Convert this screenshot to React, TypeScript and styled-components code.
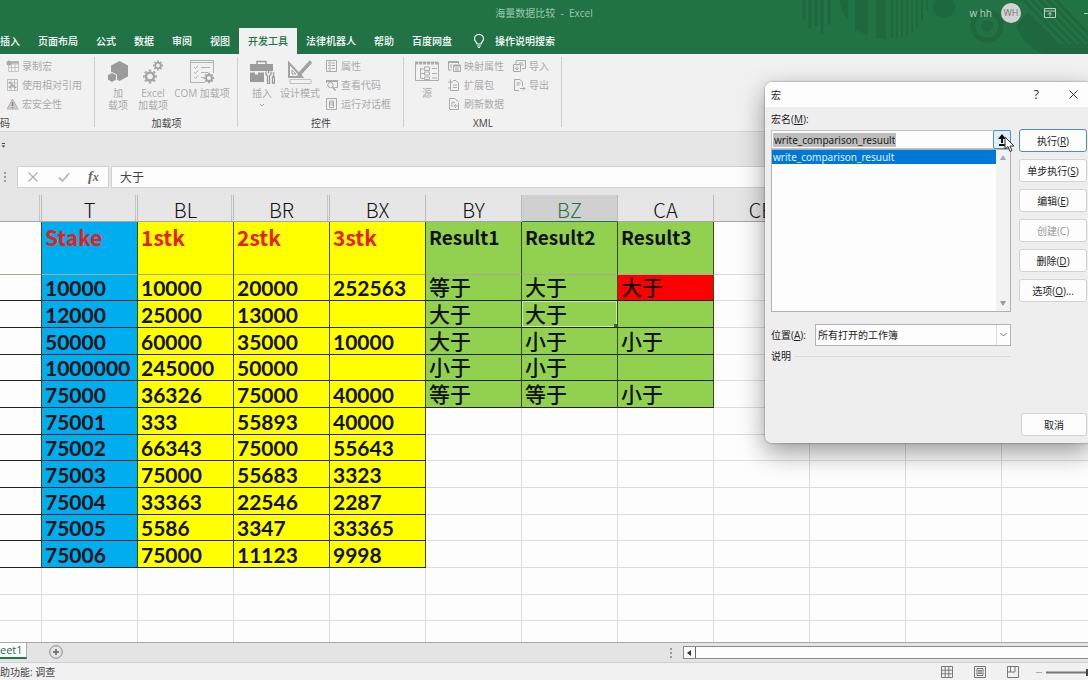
import React from "react";
import styled, { createGlobalStyle, css } from "styled-components";

const GlobalStyle = createGlobalStyle`
  *, *::before, *::after { box-sizing: border-box; }
  body { margin: 0; }
  button, input, select { font: inherit; color: inherit; margin: 0; padding: 0; border: 0; background: none; }
  svg { display: block; flex: none; }
`;

const ui = `"Open Sans", "Noto Sans CJK SC", sans-serif`;
const green = "#217346";

const Window = styled.div`
  position: relative;
  display: flex;
  flex-direction: column;
  height: 100vh;
  overflow: hidden;
  background: #fff;
  font: 10px/14px ${ui};
  color: #444;
`;

/* ---------- title and tabs ---------- */

const Header = styled.header`
  position: relative;
  background: ${green};
  color: #fff;
  flex: none;
`;
const Backdrop = styled.svg`
  position: absolute;
  right: 0;
  top: 0;
`;
const TitleBar = styled.div`
  position: relative;
  display: grid;
  grid-template-columns: 1fr auto 1fr;
  align-items: center;
  height: 25px;
  margin-bottom: 3px;
`;
const Title = styled.div`
  grid-column: 2;
  color: #9ac7ac;
  white-space: pre;
`;
const Account = styled.div`
  display: flex;
  align-items: center;
  justify-content: flex-end;
  color: #b5d3c0;
`;
const Avatar = styled.span`
  width: 20px;
  height: 20px;
  margin: 0 23px 0 9px;
  border-radius: 50%;
  background: #d3d3d1;
  color: #777;
  font-size: 9px;
  line-height: 20px;
  text-align: center;
`;
const WindowButton = styled.button`
  margin-right: 28px;
  color: #b5d3c0;
  &:last-child { margin-right: 0; }
`;
const Tabs = styled.nav`
  position: relative;
  display: flex;
  height: 26px;
`;
const Tab = styled.button<{ $active?: boolean }>`
  display: flex;
  align-items: center;
  gap: 10px;
  padding: 0 9px;
  white-space: nowrap;
  font-weight: 500;
  &:first-child { padding-left: 0; }
  ${(p) => p.$active && css`background: #f1f1f1; color: ${green};`}
`;
const TellMe = styled(Tab)`
  padding-left: 12px;
`;

/* ---------- ribbon ---------- */

const Ribbon = styled.div`
  display: flex;
  flex: none;
  height: 77px;
  padding: 2px 0 0;
  background: #f1f1f1;
`;
const Group = styled.section<{ $width: number; $pad: number }>`
  display: flex;
  flex-direction: column;
  flex: none;
  position: relative;
  width: ${(p) => p.$width}px;
  &::after {
    content: "";
    position: absolute;
    right: 0;
    top: 1px;
    height: 70px;
    border-right: 1px solid #cfcfcf;
  }
  > div { padding-left: ${(p) => p.$pad}px; }
`;
const GroupBody = styled.div`
  display: flex;
  height: 59px;
  color: #aaa;
`;
const GroupLabel = styled.h2<{ $left?: boolean }>`
  margin: 0;
  font-size: 10px;
  line-height: 16px;
  font-weight: 400;
  text-align: ${(p) => (p.$left ? "left" : "center")};
`;
const Big = styled.button<{ $width: number }>`
  display: flex;
  flex-direction: column;
  align-items: center;
  width: ${(p) => p.$width}px;
  padding-top: 4px;
  line-height: 12px;
  white-space: pre;
  text-align: center;
  svg { margin-bottom: 3px; }
`;
const SmallColumn = styled.div`
  display: flex;
  flex-direction: column;
  margin-left: 5px;
  & + & { margin-left: 9px; }
`;
const Small = styled.button`
  display: flex;
  align-items: center;
  gap: 3px;
  height: 19px;
  white-space: nowrap;
`;

/* ---------- formula bar ---------- */

const FormulaZone = styled.div`
  flex: none;
  background: #e6e6e6;
  border-top: 1px solid #d4d4d4;
  padding: 9px 0 7px;
`;
const QuickAccess = styled.button`
  display: block;
  height: 10px;
  margin-bottom: 15px;
`;
const FormulaRow = styled.div`
  display: flex;
  align-items: center;
  height: 22px;
`;
const Grip = styled.svg`
  margin: 0 11px 0 4px;
`;
const FormulaButtons = styled.div`
  display: flex;
  align-items: center;
  justify-content: space-around;
  width: 92px;
  height: 22px;
  margin-right: 2px;
  background: #fdfdfd;
  border: 1px solid #d0d0d0;
`;
const FxButton = styled.button`
  font: italic bold 14px/18px "Liberation Serif", serif;
  color: #666;
  small { font-size: 12px; }
`;
const FormulaInput = styled.input`
  flex: 1;
  min-width: 0;
  height: 22px;
  padding: 0 8px;
  background: #fdfdfd;
  border: 1px solid #d0d0d0;
  font-size: 12px;
`;

/* ---------- sheet ---------- */

const Sheet = styled.main`
  flex: 1;
  min-height: 0;
  overflow: hidden;
  background: #fdfdfd;
`;
const Grid = styled.table`
  table-layout: fixed;
  width: 1098px;
  border-collapse: separate;
  border-spacing: 0;
  font-family: "Noto Sans CJK SC", sans-serif;
`;
const FirstCol = styled.col`
  width: 42px;
`;
const ColHead = styled.th<{ $selected?: boolean; $double?: boolean }>`
  height: 27px;
  padding: 3px 0 0;
  font-size: 20px;
  line-height: 22px;
  font-weight: 300;
  color: #111;
  background: #e6e6e6;
  border-right: 1px solid #bcbcbc;
  border-bottom: 1px solid #a6a6a6;
  ${(p) => p.$double && css`box-shadow: inset -1px 0 #e6e6e6, inset -2px 0 #c4c4c4;`}
  ${(p) => p.$selected && css`background: #d0d0d0; color: ${green}; border-bottom-color: ${green};`}
`;
const fills = {
  blue: "#00adee",
  yellow: "#ffff00",
  green: "#92d050",
  red: "#ff0000",
  none: "transparent",
};
type Fill = keyof typeof fills;

const Row = styled.tr<{ $head?: boolean }>`
  height: ${(p) => (p.$head ? 53 : 27)}px;
  &:nth-child(3n + 2) { height: ${(p) => (p.$head ? 53 : 26)}px; }
`;
const Cell = styled.td<{ $fill: Fill; $dark?: boolean; $right?: boolean; $head?: boolean; $red?: boolean; $num?: boolean; $active?: boolean }>`
  position: relative;
  padding: 0 0 0 3px;
  white-space: nowrap;
  background: ${(p) => fills[p.$fill]};
  color: ${(p) => (p.$red ? "#e8201a" : "#111")};
  font-family: "Liberation Sans", "Noto Sans CJK SC", sans-serif;
  font-size: 21px;
  line-height: 25px;
  font-weight: 500;
  border-right: 1px solid ${(p) => (p.$dark || p.$right ? "#3a4a20" : "#dcdcdc")};
  border-bottom: 1px solid ${(p) => (p.$head ? "#a9a98c" : p.$dark ? "#222" : "#dcdcdc")};
  ${(p) => p.$head && css`
    vertical-align: top;
    font-family: "Noto Sans CJK SC", sans-serif;
    font-size: ${p.$red ? 21 : 19}px;
    line-height: 30px;
    font-weight: 700;
  `}
  ${(p) => p.$num && css`font-family: Lato, sans-serif; font-weight: 700;`}
  ${(p) => p.$active && css`
    box-shadow: inset 0 0 0 1px #c9e8b4;
    &::after {
      content: "";
      position: absolute;
      right: 0;
      bottom: 0;
      width: 3px;
      height: 3px;
      background: ${green};
    }
  `}
`;

/* ---------- bottom bars ---------- */

const SheetBar = styled.div`
  display: flex;
  flex: none;
  height: 20px;
  background: #e4e4e4;
  border-top: 1px solid #a8a8a8;
`;
const SheetTab = styled.button`
  width: 27px;
  height: 16px;
  background: #fdfdfd;
  border-right: 1px solid #aaa;
  border-bottom: 2px solid ${green};
  color: ${green};
  font-size: 11px;
  line-height: 14px;
  text-align: left;
`;
const AddSheet = styled.button`
  margin: 2px auto 0 22px;
  align-self: flex-start;
`;
const Scroller = styled.div`
  display: flex;
  align-items: center;
  width: 39%;
  padding-left: 2px;
`;
const Track = styled.div`
  display: flex;
  flex: 1;
  height: 13px;
  border: 1px solid #8a8a8a;
  border-right: 0;
  background: #fdfdfd;
`;
const TrackButton = styled.button`
  display: flex;
  align-items: center;
  justify-content: center;
  width: 12px;
  border-right: 1px solid #666;
`;
const StatusBar = styled.footer`
  display: flex;
  align-items: center;
  flex: none;
  height: 18px;
  background: #f1f1f2;
  border-top: 1px solid #d0d0d0;
`;
const StatusText = styled.span`
  margin-right: auto;
`;
const ViewButton = styled.button`
  margin-right: 21px;
  &:last-of-type { margin-right: 15px; }
`;

/* ---------- dialog ---------- */

const Dialog = styled.section`
  position: absolute;
  right: -4px;
  top: 82px;
  width: 327px;
  height: 361px;
  display: flex;
  flex-direction: column;
  background: #eee;
  border-radius: 7px;
  overflow: hidden;
  color: #222;
`;
const DialogShadow = styled.div`
  position: absolute;
  right: -4px;
  top: 82px;
  width: 327px;
  height: 361px;
  border-radius: 7px;
  box-shadow: 0 0 2px rgba(0, 0, 0, 0.5), 0 9px 26px rgba(0, 0, 0, 0.4);
`;
const DialogTitle = styled.header`
  display: flex;
  align-items: center;
  height: 25px;
  padding: 0 14px 0 6px;
  background: #fdfdfd;
  h1 { margin: 0 auto 0 0; font-size: 10px; font-weight: 400; }
  button { margin-left: 30px; }
`;
const HelpButton = styled.button`
  font-size: 12px;
`;
const DialogBody = styled.div`
  display: flex;
  flex: 1;
  justify-content: space-between;
  padding: 5px 5px 7px 6px;
`;
const Fields = styled.div`
  width: 240px;
`;
const NameLabel = styled.label`
  display: block;
  height: 18px;
`;
const NameBox = styled.div`
  display: flex;
  align-items: center;
  height: 19px;
  padding-left: 1px;
  background: #fdfdfd;
  border: 1px solid #c2c2c2;
  border-right: 0;
`;
const NameInput = styled.input`
  field-sizing: content;
  height: 14px;
  padding: 0 1px;
  background: #bdbdbd;
  font-family: "Noto Sans", sans-serif;
`;
const RefButton = styled.button`
  display: flex;
  align-items: center;
  justify-content: center;
  width: 18px;
  height: 19px;
  margin-left: auto;
  border: 1px solid #4f96b5;
  border-radius: 2px;
  background: #dfeff8;
`;
const ListBox = styled.div`
  display: flex;
  height: 163px;
  border: 1px solid #b0b0b0;
  background: #fdfdfd;
`;
const List = styled.ul`
  flex: 1;
  margin: 0;
  padding: 0;
  list-style: none;
`;
const Item = styled.li`
  padding-left: 1px;
  background: #0078d7;
  color: #e2f2ff;
  font-family: "Noto Sans", sans-serif;
`;
const ListScroll = styled.div`
  display: flex;
  flex-direction: column;
  justify-content: space-between;
  align-items: center;
  width: 14px;
  padding: 5px 0;
  background: #f2f2f2;
`;
const PlaceRow = styled.div`
  display: flex;
  align-items: center;
  justify-content: space-between;
  margin: 12px 0 3px;
`;
const SelectBox = styled.div`
  position: relative;
  width: 196px;
  svg { position: absolute; right: 4px; top: 8px; }
  &::after { content: ""; position: absolute; right: 14px; top: 1px; bottom: 1px; border-left: 1px solid #ddd; }
`;
const Select = styled.select`
  appearance: none;
  width: 100%;
  height: 22px;
  padding: 0 2px;
  background: #fdfdfd;
  border: 1px solid #b4b4b4;
`;
const Description = styled.div`
  display: flex;
  align-items: center;
  gap: 4px;
  &::after { content: ""; flex: 1; border-top: 1px solid #dcdcdc; }
`;
const Actions = styled.div`
  display: flex;
  flex-direction: column;
  gap: 7px;
  width: 68px;
  padding-top: 17px;
`;
const Action = styled.button<{ $primary?: boolean; $last?: boolean }>`
  height: 23px;
  background: #fdfdfd;
  border: 1px solid ${(p) => (p.$primary ? "#4a90bd" : "#d2d2d2")};
  border-radius: 3px;
  ${(p) => p.$last && css`margin: auto 0 0 2px;`}
  &:disabled { color: #999; }
`;
const Pointer = styled.svg`
  position: absolute;
  right: 73px;
  top: 136px;
`;

/* ---------- icons ---------- */

const Line = ({ w = 12, h = 12, vb, children, sw = 1 }: { w?: number; h?: number; vb?: string; sw?: number; children: React.ReactNode }) => (
  <svg width={w} height={h} viewBox={vb ?? `0 0 ${w} ${h}`} fill="none" stroke="currentColor" strokeWidth={sw}>
    {children}
  </svg>
);

const Record = () => (
  <Line w={13}><path d="M2.5 5v6.5h10v-10H5M5 4h7M5.5 4v7M9 4v7M2.5 7.5h10" strokeOpacity=".6" /><circle cx="3" cy="3" r="2.5" fill="currentColor" stroke="none" /><path d="M5 2.5h7.5" strokeWidth="2" /></Line>
);
const Relative = () => (
  <Line w={13}><path d="M1.5.5h10v11h-10zM1.5 4h10M1.5 8h10M5 .5v11M8.500 .5v11" strokeOpacity=".7" /><path d="M3 3l7 6M3 9l3-3" strokeWidth="1.500" /></Line>
);
const Warning = () => (
  <Line w={13}><path d="M6.500 1L12 11H1z" fill="#cfcbd0" stroke="#b5b0b5" /><path d="M6.500 4v4M6.500 9v1.200" stroke="#8d858d" strokeWidth="1.500" /></Line>
);
const Hexes = () => (
  <svg width="24" height="24" viewBox="0 0 24 24" fill="#9b9b9b">
    <path d="M13.500 1L22 5.500v11L13.500 21 5 16.500v-11z" />
    <path d="M6 12.500l4.500 2.300v5L6 22.500l-4.500-2.700v-5z" stroke="#f1f1f1" />
  </svg>
);
const gear = (cx: number, cy: number, r: number, w: number) => (
  <g fill="none" stroke="#a3a3a3">
    <circle cx={cx} cy={cy} r={r} strokeWidth={w} />
    {[0, 45, 90, 135, 180, 225, 270, 315].map((a) => (
      <path key={a} strokeWidth={w} d={`M${cx} ${cy - r - w / 2}v-${w * 0.7}`} transform={`rotate(${a} ${cx} ${cy})`} />
    ))}
  </g>
);
const Gears = () => (
  <svg width="24" height="24" viewBox="0 0 24 24">{gear(9, 16.5, 4, 2.4)}{gear(17, 5.5, 2.8, 1.8)}</svg>
);
const ComAddins = () => (
  <svg width="26" height="24" viewBox="0 0 26 24" fill="none" stroke="#b3b3b3">
    <path d="M16 22.500H1.500v-22h23V13M1 2.500h23" />
    <path d="M12 7.500h9M12 12.500h7M12 17.500h3M5 7l1.500 1.500L9 5.500M5 12l1.500 1.500L9 10.500M5 17l1.500 1.500L9 15.500" />
    {gear(20, 18, 3, 1.8)}
  </svg>
);
const Toolbox = () => (
  <svg width="26" height="24" viewBox="0 0 26 24" fill="#9b9b9b">
    <path d="M8 4V1.500h9V4" fill="none" stroke="#9b9b9b" strokeWidth="1.500" />
    <path d="M1 4h23v7H1zM1 12.500h5v2h3v-2h6V22H1z" />
    <path d="M17 11.500v3l1.500 1.500V24h2v-8l1.500-1.500v-3M19.500 11v2.500M24.500 12v5M23.500 17h2v6h-2z" fill="none" stroke="#9b9b9b" strokeWidth="1.300" />
  </svg>
);
const Design = () => (
  <svg width="26" height="24" viewBox="0 0 26 24" fill="none" stroke="#a3a3a3">
    <path d="M2 3v14h13z" strokeWidth="2" /><path d="M5 10v4h4z" />
    <path d="M24 1.500L13 13.500" strokeWidth="3.500" /><path d="M12 12.500l-2 5 5-2.500" fill="#a3a3a3" />
    <path d="M3 19.500h21v4H3z" strokeOpacity=".6" />
  </svg>
);
const Properties = () => (
  <Line><path d="M.5.500h10v11H.5zM4 .5v11M2 3h1M5.500 3H9M2 5.500h1M5.500 5.500H9M2 8.500h1M5.500 8.500H9" /></Line>
);
const ViewCode = () => (
  <Line><path d="M8.500 8.500h3v-7H.5V4M.5 8v.5" /><path d="M0 2h12" strokeWidth="2" /><circle cx="4.500" cy="6" r="2.700" /><path d="M6.500 8l3 3.500" strokeWidth="1.500" /></Line>
);
const RunDialog = () => (
  <Line><path d="M.5.500h10v11H.5zM3.500 3h4v6.500h-4zM4 5h3M4 7h3" /></Line>
);
const Source = () => (
  <svg width="24" height="24" viewBox="0 0 24 24" fill="none" stroke="#adadad">
    <path d="M.5 2.500h23v18H.5z" /><path d="M0 3h24" strokeWidth="3" strokeDasharray="3 1" />
    <path d="M5.500 8v10.500M5.500 9h4M5.500 13.500h4M5.500 18.500h4M9.500 7h5v3.500h-5zM9.500 12h5v3h-5zM9.500 17h5v2.500h-5zM17 8.500h5M17 13.500h5M17 18h5" />
  </svg>
);
const MapProps = () => (
  <Line w={13}><path d="M.5 1.500h10V4M.5 1v9h3M5.500 5.500h7v6h-7zM7 8h4M7 10h4M2 5h2M2 7h2" /><path d="M.5 2h10.500M5.500 5.500h7" strokeWidth="2" /></Line>
);
const Pack = () => (
  <Line w={13}><path d="M2.500 4v7.500h8V4L8 1.500H5M5 6h4M5 8.500h4M0 3h5M2.500.500v5M0 9h2" /></Line>
);
const Refresh = () => (
  <Line w={13}><path d="M7 .5H1.500v11h9V5M7 .5L10.500 4M4 4v5M8 6l-2 2 2 2M6 8h4M4 4l3 .5" /></Line>
);
const Import = () => (
  <Line w={13}><path d="M3 4V.500h9.500v8H9M.5 4.500h7v7h-7zM6 3h4M8 5h3M4 5.500v4M2 8l2 2 2-2" /></Line>
);
const Export = () => (
  <Line w={13}><path d="M6 11.500H1.500V.500H7L9.500 3v4M3.500 4h4M3.500 6h3M7 9.500h5M10 7.500l2 2-2 2" /></Line>
);

const diagonals = [14, 22, 30, 38, 46];

const Decoration = () => (
  <Backdrop width="288" height="54" viewBox="0 0 288 54" fill="none" stroke="#1f683f" strokeWidth="4" aria-hidden="true">
    <path d="M4 0v20M10 0v28M16 0v26M22 0v34M29 0v25" strokeWidth="3" />
    <path d="M40 0h8v19q-8-8-8-19zM55 0h13v35l-13-5zM76 0h10v39l-10-1z" fill="#1f683f" stroke="none" />
    <path d="M92 0v38M97 0v38M102 0v37M107 0v36M112 0v33M117 0v28M122 0v20M127 0v10" strokeWidth="2" />
    <circle cx="144" cy="7" r="11" fill="#1f683f" stroke="none" />
    <circle cx="187" cy="26" r="14" strokeWidth="5" />
    <circle cx="187" cy="26" r="6" fill="#1f683f" stroke="none" />
    <path d="M216 26q6 18 26 28h46V44h-28L228 12z" fill="#1f683f" stroke="none" />
    {diagonals.map((x) => (
      <path key={x} d={`M${x + 204} -6L${x + 254} 46`} strokeWidth="3" />
    ))}
  </Backdrop>
);

/* ---------- data ---------- */

const columns = ["", "T", "BL", "BR", "BX", "BY", "BZ", "CA", "CB", "", "", ""];
const headings = ["Stake", "1stk", "2stk", "3stk", "Result1", "Result2", "Result3"];
const rows: string[][] = [
  ["10000", "10000", "20000", "252563", "等于", "大于", "大于"],
  ["12000", "25000", "13000", "", "大于", "大于", ""],
  ["50000", "60000", "35000", "10000", "大于", "小于", "小于"],
  ["1000000", "245000", "50000", "", "小于", "小于", ""],
  ["75000", "36326", "75000", "40000", "等于", "等于", "小于"],
  ["75001", "333", "55893", "40000"],
  ["75002", "66343", "75000", "55643"],
  ["75003", "75000", "55683", "3323"],
  ["75004", "33363", "22546", "2287"],
  ["75005", "5586", "3347", "33365"],
  ["75006", "75000", "11123", "9998"],
  [],
  [],
  [],
];
const fillFor = (i: number): Fill => (i === 0 ? "blue" : i < 4 ? "yellow" : "green");
const slots = Array.from({ length: 11 }, (_, i) => i);

const actions: { text: string; hot: string; tail?: string; disabled?: boolean }[] = [
  { text: "执行", hot: "R" },
  { text: "单步执行", hot: "S" },
  { text: "编辑", hot: "E" },
  { text: "创建", hot: "C", disabled: true },
  { text: "删除", hot: "D" },
  { text: "选项", hot: "O", tail: "..." },
];

export default function App() {
  return (
    <Window>
      <GlobalStyle />
      <Header>
        <Decoration />
        <TitleBar>
          <Title>海量数据比较  -  Excel</Title>
          <Account>
            <span>w hh</span>
            <Avatar>WH</Avatar>
            <WindowButton aria-label="功能区显示选项">
              <Line w={12} h={10}><path d="M.5.500h11v9H.5zM.5 3h11M6 8.500V4.500M4 6.500l2-2 2 2" /></Line>
            </WindowButton>
            <WindowButton aria-label="最小化">
              <Line w={4} h={10}><path d="M0 5.500h4" /></Line>
            </WindowButton>
          </Account>
        </TitleBar>
        <Tabs>
          {["插入", "页面布局", "公式", "数据", "审阅", "视图", "开发工具", "法律机器人", "帮助", "百度网盘"].map((t) => (
            <Tab key={t} $active={t === "开发工具"}>{t}</Tab>
          ))}
          <TellMe>
            <Line w={12} h={14} sw={1.2}><path d="M4 10C4 8 1.500 7.500 1.500 4.800a4.500 4.300 0 0 1 9 0C10.500 7.500 8 8 8 10zM4 12h4M5 13.500h2" /></Line>
            操作说明搜索
          </TellMe>
        </Tabs>
      </Header>

      <Ribbon>
        <Group $width={95} $pad={6}>
          <GroupBody>
            <div>
              <Small><Record />录制宏</Small>
              <Small><Relative />使用相对引用</Small>
              <Small><Warning />宏安全性</Small>
            </div>
          </GroupBody>
          <GroupLabel $left>码</GroupLabel>
        </Group>
        <Group $width={143} $pad={7}>
          <GroupBody>
            <Big $width={32}><Hexes />{"加\n载项"}</Big>
            <Big $width={38}><Gears />{"Excel\n加载项"}</Big>
            <Big $width={60}><ComAddins />COM 加载项</Big>
          </GroupBody>
          <GroupLabel>加载项</GroupLabel>
        </Group>
        <Group $width={166} $pad={7}>
          <GroupBody>
            <Big $width={34}>
              <Toolbox />插入
              <Line w={6} h={12}><path d="M1 5l2 2 2-2" /></Line>
            </Big>
            <Big $width={42}><Design />设计模式</Big>
            <SmallColumn>
              <Small><Properties />属性</Small>
              <Small><ViewCode />查看代码</Small>
              <Small><RunDialog />运行对话框</Small>
            </SmallColumn>
          </GroupBody>
          <GroupLabel>控件</GroupLabel>
        </Group>
        <Group $width={158} $pad={7}>
          <GroupBody>
            <Big $width={32}><Source />源</Big>
            <SmallColumn>
              <Small><MapProps />映射属性</Small>
              <Small><Pack />扩展包</Small>
              <Small><Refresh />刷新数据</Small>
            </SmallColumn>
            <SmallColumn>
              <Small><Import />导入</Small>
              <Small><Export />导出</Small>
            </SmallColumn>
          </GroupBody>
          <GroupLabel>XML</GroupLabel>
        </Group>
      </Ribbon>

      <FormulaZone>
        <QuickAccess aria-label="自定义快速访问工具栏">
          <svg width="6" height="6" viewBox="0 0 6 6" fill="#444"><path d="M2 0h3v1H2zM1.500 2.500h4l-2 2z" /></svg>
        </QuickAccess>
        <FormulaRow>
          <Grip width="2" height="10" viewBox="0 0 2 10" fill="#999"><path d="M0 0h2v2H0zM0 4h2v2H0zM0 8h2v2H0z" /></Grip>
          <FormulaButtons>
            <button aria-label="取消"><Line sw={1.3}><path d="M1.500 1.500l9 9M10.500 1.500l-9 9" stroke="#b0b0b0" /></Line></button>
            <button aria-label="输入"><Line sw={1.8}><path d="M1 6.500L4.500 10 11 2.500" stroke="#b8b8b8" /></Line></button>
            <FxButton aria-label="插入函数">f<small>x</small></FxButton>
          </FormulaButtons>
          <FormulaInput aria-label="编辑栏" defaultValue="大于" />
        </FormulaRow>
      </FormulaZone>

      <Sheet>
        <Grid>
          <colgroup>
            <FirstCol />
            {slots.map((i) => <col key={i} />)}
          </colgroup>
          <thead>
            <tr>
              {columns.map((c, i) => (
                <ColHead key={i} $selected={c === "BZ"} $double={i < 4}>{c}</ColHead>
              ))}
            </tr>
          </thead>
          <tbody>
            <Row $head>
              <Cell $fill="none" $head $right />
              {slots.map((i) => (
                <Cell key={i} $head={i < 7} $dark={i < 7} $red={i < 4} $fill={i < 7 ? fillFor(i) : "none"}>{headings[i]}</Cell>
              ))}
            </Row>
            {rows.map((r, n) => (
              <Row key={n}>
                <Cell $fill="none" $dark={r.length > 0} />
                {slots.map((i) => (
                  <Cell
                    key={i}
                    $num={i < 4}
                    $dark={i < r.length}
                    $fill={i >= r.length ? "none" : n === 0 && i === 6 ? "red" : fillFor(i)}
                    $active={n === 1 && i === 5}
                  >
                    {r[i]}
                  </Cell>
                ))}
              </Row>
            ))}
          </tbody>
        </Grid>
      </Sheet>

      <SheetBar>
        <SheetTab>eet1</SheetTab>
        <AddSheet aria-label="新工作表">
          <Line w={14} h={14}><circle cx="7" cy="7" r="6.300" stroke="#888" /><path d="M7 4v6M4 7h6" stroke="#666" strokeWidth="1.500" /></Line>
        </AddSheet>
        <Scroller>
          <Grip width="2" height="10" viewBox="0 0 2 10" fill="#999"><path d="M0 0h2v2H0zM0 4h2v2H0zM0 8h2v2H0z" /></Grip>
          <Track>
            <TrackButton aria-label="向左滚动">
              <svg width="4" height="6" viewBox="0 0 4 6" fill="#333"><path d="M4 0v6L0 3z" /></svg>
            </TrackButton>
          </Track>
        </Scroller>
      </SheetBar>
      <StatusBar>
        <StatusText>助功能: 调查</StatusText>
        <ViewButton aria-label="普通"><Line><path d="M.5.500h11v11H.5zM.5 4.200h11M.5 7.800h11M4.200.5v11M7.800.5v11" stroke="#777" /></Line></ViewButton>
        <ViewButton aria-label="页面布局"><Line><path d="M.5.500h11v11H.5zM3 2.500h6v7H3zM4 4.500h4M4 6h4M4 7.500h4" stroke="#777" /></Line></ViewButton>
        <ViewButton aria-label="分页预览"><Line><path d="M.5.500h11v11H.5zM3.500.500V6H8V.5M.5 6h3" stroke="#777" /></Line></ViewButton>
        <svg width="54" height="12" viewBox="0 0 54 12" stroke="#777"><path d="M2 6.500h6" stroke="#aaa" /><path d="M12 6.500h42" strokeWidth="2" /><path d="M53 3v7" stroke="#444" strokeWidth="2" /></svg>
      </StatusBar>

      <DialogShadow />
      <Dialog role="dialog" aria-label="宏">
        <DialogTitle>
          <h1>宏</h1>
          <HelpButton aria-label="帮助">?</HelpButton>
          <button aria-label="关闭"><Line w={9} h={9}><path d="M.5.500l8 8M8.500.500l-8 8" stroke="#333" /></Line></button>
        </DialogTitle>
        <DialogBody>
          <Fields>
            <NameLabel htmlFor="macro-name">宏名(<u>M</u>):</NameLabel>
            <NameBox>
              <NameInput id="macro-name" defaultValue="write_comparison_resuult" />
              <RefButton aria-label="选择引用">
                <svg width="8" height="12" viewBox="0 0 8 12" fill="#111"><path d="M4 0l4 5H5v4H3V5H0zM1 10h6v2H1z" /></svg>
              </RefButton>
            </NameBox>
            <ListBox>
              <List><Item>write_comparison_resuult</Item></List>
              <ListScroll>
                <svg width="6" height="5" viewBox="0 0 6 5" fill="#aaa"><path d="M3 0l3 5H0z" /></svg>
                <svg width="6" height="5" viewBox="0 0 6 5" fill="#999"><path d="M0 0h6L3 5z" /></svg>
              </ListScroll>
            </ListBox>
            <PlaceRow>
              <label htmlFor="place">位置(<u>A</u>):</label>
              <SelectBox>
                <Select id="place"><option>所有打开的工作簿</option></Select>
                <Line w={7} h={6}><path d="M.5 1l3 3 3-3" stroke="#777" /></Line>
              </SelectBox>
            </PlaceRow>
            <Description>说明</Description>
          </Fields>
          <Actions>
            {actions.map((a, i) => (
              <Action key={a.hot} $primary={i === 0} disabled={a.disabled}>
                {a.text}({a.disabled ? a.hot : <u>{a.hot}</u>}){a.tail}
              </Action>
            ))}
            <Action $last>取消</Action>
          </Actions>
        </DialogBody>
      </Dialog>
      <Pointer width="11" height="17" viewBox="0 0 11 17" fill="#fff" stroke="#333">
        <path d="M1 1v12l3-2.500 2 5 2-1-2-4.500h4z" />
      </Pointer>
    </Window>
  );
}
